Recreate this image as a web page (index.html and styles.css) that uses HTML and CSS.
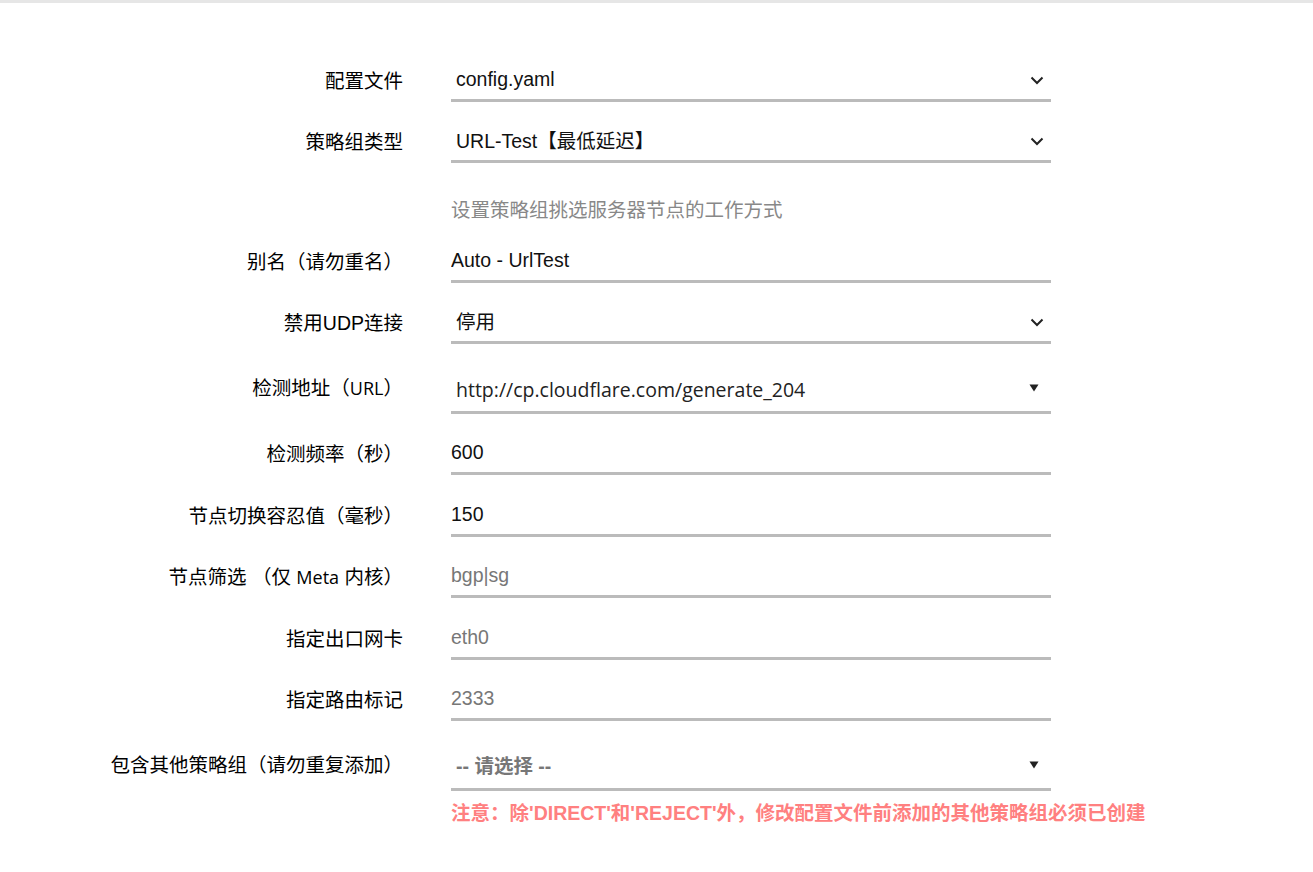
FILE: index.html
```html
<!DOCTYPE html>
<html lang="zh-CN">
<head>
<meta charset="utf-8">
<title>策略组配置</title>
<link rel="stylesheet" href="styles.css">
</head>
<body>
<div class="topbar"></div>
<form class="form">
  <div class="row">
    <label class="label">配置文件</label>
    <div class="field select-wrap">
      <select class="control select"><option>config.yaml</option></select>
      <svg class="chev" width="14" height="9" viewBox="0 0 14 9"><path d="M1.5 1.5 L7 7 L12.5 1.5" fill="none" stroke="#222" stroke-width="2"/></svg>
    </div>
  </div>
  <div class="row">
    <label class="label">策略组类型</label>
    <div class="field select-wrap">
      <select class="control select"><option>URL-Test【最低延迟】</option></select>
      <svg class="chev" width="14" height="9" viewBox="0 0 14 9"><path d="M1.5 1.5 L7 7 L12.5 1.5" fill="none" stroke="#222" stroke-width="2"/></svg>
    </div>
  </div>
  <div class="desc-row">
    <div class="desc">设置策略组挑选服务器节点的工作方式</div>
  </div>
  <div class="row">
    <label class="label">别名（请勿重名）</label>
    <div class="field"><input class="control" type="text" value="Auto - UrlTest"></div>
  </div>
  <div class="row">
    <label class="label">禁用UDP连接</label>
    <div class="field select-wrap">
      <select class="control select"><option>停用</option></select>
      <svg class="chev" width="14" height="9" viewBox="0 0 14 9"><path d="M1.5 1.5 L7 7 L12.5 1.5" fill="none" stroke="#222" stroke-width="2"/></svg>
    </div>
  </div>
  <div class="row tall">
    <label class="label">检测地址（<span class="alt">URL</span>）</label>
    <div class="field select-wrap">
      <select class="control select alt-select"><option>http://cp.cloudflare.com/generate_204</option></select>
      <svg class="tri" width="10" height="8" viewBox="0 0 10 8"><path d="M0.5 0.5 L9.5 0.5 L5 7.5 Z" fill="#222"/></svg>
    </div>
  </div>
  <div class="row">
    <label class="label">检测频率（秒）</label>
    <div class="field"><input class="control" type="text" value="600"></div>
  </div>
  <div class="row">
    <label class="label">节点切换容忍值（毫秒）</label>
    <div class="field"><input class="control" type="text" value="150"></div>
  </div>
  <div class="row">
    <label class="label">节点筛选 （仅 <span class="alt">Meta</span> 内核）</label>
    <div class="field"><input class="control" type="text" placeholder="bgp|sg"></div>
  </div>
  <div class="row">
    <label class="label">指定出口网卡</label>
    <div class="field"><input class="control" type="text" placeholder="eth0"></div>
  </div>
  <div class="row">
    <label class="label">指定路由标记</label>
    <div class="field"><input class="control" type="text" placeholder="2333"></div>
  </div>
  <div class="row tall last">
    <label class="label">包含其他策略组（请勿重复添加）</label>
    <div class="field select-wrap">
      <select class="control select multi"><option>-- 请选择 --</option></select>
      <svg class="tri" width="10" height="8" viewBox="0 0 10 8"><path d="M0.5 0.5 L9.5 0.5 L5 7.5 Z" fill="#222"/></svg>
    </div>
  </div>
  <div class="note-row">
    <div class="note">注意：除'DIRECT'和'REJECT'外，修改配置文件前添加的其他策略组必须已创建</div>
  </div>
</form>
</body>
</html>
```

FILE: styles.css
```css
* {
  box-sizing: border-box;
}

html, body {
  margin: 0;
  padding: 0;
  background: #fff;
}

body {
  font-family: "Liberation Sans", Arial, "Noto Sans CJK SC", sans-serif;
  font-size: 19.5px;
  color: #111;
}

.topbar {
  height: 3px;
  background: #e6e6e6;
}

.form {
  padding-top: 56.5px;
}

.row {
  display: flex;
  align-items: flex-start;
  margin-bottom: 19.5px;
}

.row.last {
  margin-bottom: 0;
}

.label {
  flex: none;
  width: 403px;
  padding-top: 2px;
  text-align: right;
  line-height: 39px;
  color: #000;
  white-space: nowrap;
}

.row.tall .label {
  padding-top: 3px;
  line-height: 43px;
}

.alt {
  font-family: "Open Sans", "Noto Sans", sans-serif;
  font-size: 18px;
}

.field {
  flex: none;
  width: 600px;
  margin-left: 48px;
}

.select-wrap {
  position: relative;
}

.control {
  display: block;
  width: 100%;
  height: 42px;
  margin: 0;
  padding: 0;
  border: 0;
  border-bottom: 3px solid #bbb;
  border-radius: 0;
  background: transparent;
  font-family: "Liberation Sans", Arial, "Noto Sans CJK SC", sans-serif;
  font-size: 19.5px;
  color: #111;
  outline: none;
  -webkit-appearance: none;
  appearance: none;
}

.control::placeholder {
  color: #777;
  opacity: 1;
}

.select {
  padding-left: 5px;
}

.row.tall .control {
  height: 50px;
  padding-top: 4px;
}

.alt-select {
  font-family: "Open Sans", "Noto Sans", sans-serif;
  font-size: 19.5px;
  color: #222;
}

.multi {
  font-weight: bold;
  color: #777;
}

.chev {
  position: absolute;
  right: 7px;
  top: 16px;
}

.tri {
  position: absolute;
  right: 12px;
  top: 20px;
}

.desc-row,
.note-row {
  padding-left: 451px;
}

.desc {
  padding-top: 15.5px;
  padding-bottom: 18.5px;
  line-height: 24px;
  color: #888;
}

.note {
  margin-top: 10.5px;
  line-height: 24px;
  font-weight: bold;
  color: #ff8080;
}
```
